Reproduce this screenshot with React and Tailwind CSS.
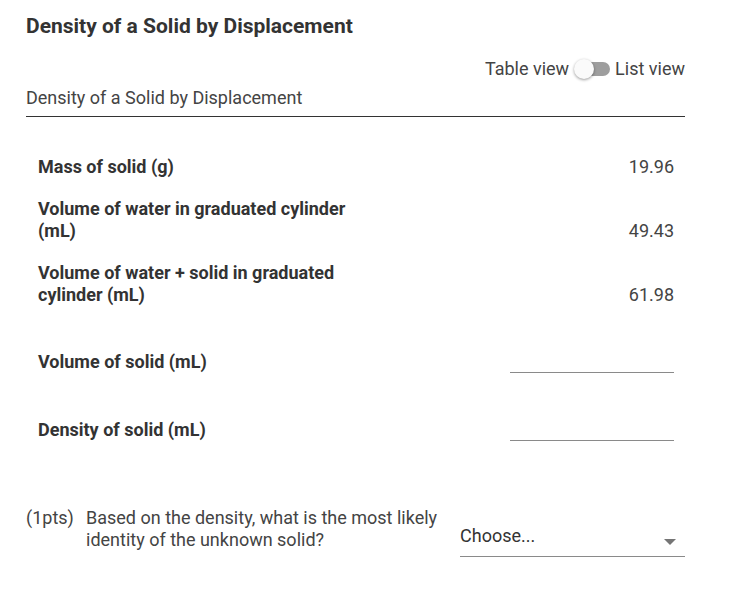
import React, { useState } from 'react';

const rows = [
  { label: 'Mass of solid (g)', value: '19.96' },
  { label: 'Volume of water in graduated cylinder (mL)', value: '49.43' },
  { label: 'Volume of water + solid in graduated cylinder (mL)', value: '61.98' },
];

export default function App() {
  const [listView, setListView] = useState(false);

  return (
    <div className="min-h-screen bg-white text-[#333] font-['Roboto',sans-serif]">
      <div className="ml-[26px] w-[659px] pt-[12px]">
        <h1 className="text-[21px] leading-[28px] font-bold text-[#333]">Density of a Solid by Displacement</h1>

        {/* view switch */}
        <div className="mt-[18px] flex items-center justify-end text-[18px] leading-[22px] text-[#444]">
          <span>Table view</span>
          <button onClick={() => setListView(!listView)} className="relative mx-[1px] h-[22px] w-[44px]">
            <span className="absolute left-[10px] right-[4px] top-[4px] h-[14px] rounded-full bg-[#9e9e9e]" />
            <span className="absolute left-[4px] top-[1px] h-[20px] w-[20px] rounded-full bg-[#fafafa] shadow-[0_1px_3px_rgba(0,0,0,0.4)]" />
          </button>
          <span>List view</span>
        </div>

        <div className="mt-[7px] border-b border-[#333] pb-[7px] text-[18px] leading-[22px] text-[#444]">
          Density of a Solid by Displacement
        </div>

        {/* data table */}
        <table className="mt-[29px] w-full border-collapse">
          <tbody>
            {rows.map((r) => (
              <tr key={r.label}>
                <td className="w-[330px] py-[10px] pl-[12px] align-bottom text-[18px] leading-[22px] font-bold text-[#333]">{r.label}</td>
                <td className="py-[10px] pr-[11px] text-right align-bottom text-[18px] leading-[22px] text-[#444]">{r.value}</td>
              </tr>
            ))}
            <tr><td colSpan={2} className="h-[12px]" /></tr>
            {['Volume of solid (mL)', 'Density of solid (mL)'].map((l) => (
              <tr key={l} className="h-[68px]">
                <td className="pl-[12px] align-middle text-[18px] leading-[22px] font-bold text-[#333]">{l}</td>
                <td className="pr-[11px] align-middle">
                  <div className="flex justify-end">
                    <input className="h-[22px] w-[164px] border-b border-[#8a8a8a] text-right text-[18px] outline-none" />
                  </div>
                </td>
              </tr>
            ))}
          </tbody>
        </table>

        {/* question */}
        <div className="mt-[43px] flex text-[18px] leading-[22px] text-[#444]">
          <span className="w-[60px] shrink-0">(1pts)</span>
          <span className="w-[360px]">Based on the density, what is the most likely identity of the unknown solid?</span>
          <div className="ml-auto flex h-[50px] w-[225px] items-end justify-between border-b border-[#8a8a8a] pb-[9px]">
            <span className="text-[#333]">Choose...</span>
            <svg width="12" height="6" viewBox="0 0 12 6" className="mb-[2px] mr-[9px]">
              <path d="M0 0h12L6 6z" fill="#757575" />
            </svg>
          </div>
        </div>
      </div>
    </div>
  );
}
